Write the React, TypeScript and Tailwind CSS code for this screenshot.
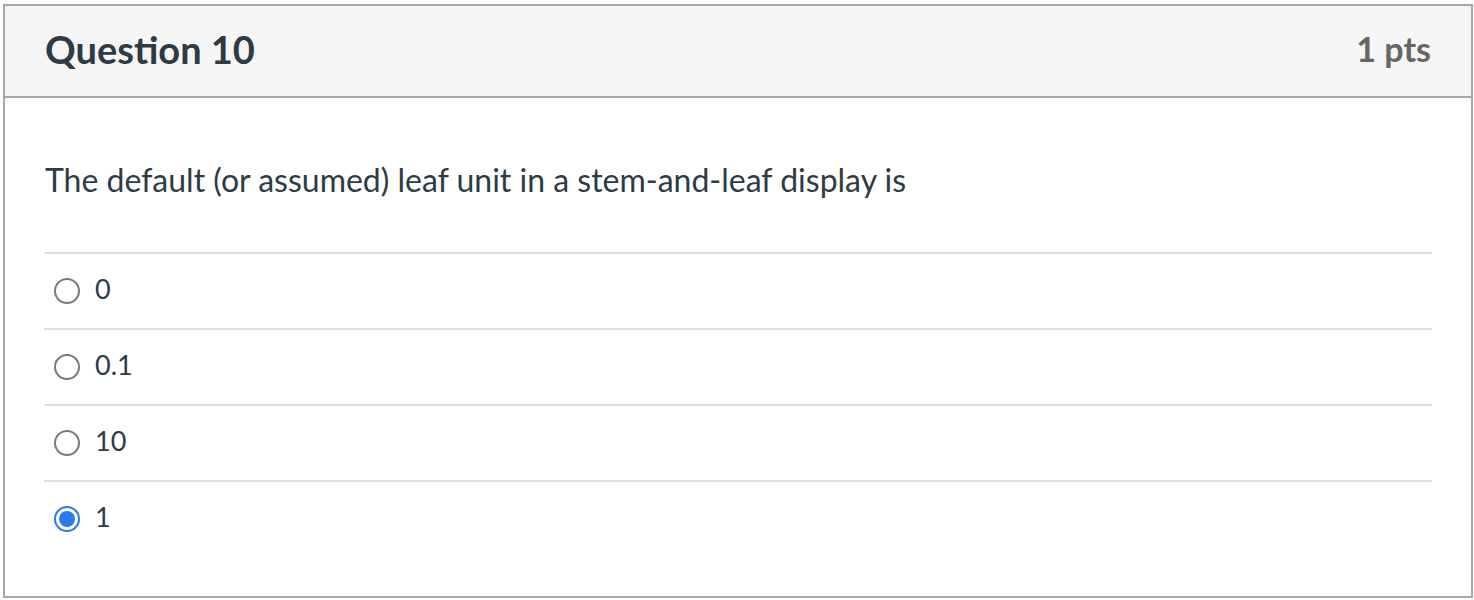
import React from "react";

const options = [
  { label: "0", checked: false },
  { label: "0.1", checked: false },
  { label: "10", checked: false },
  { label: "1", checked: true },
];

function Radio({ checked }: { checked: boolean }) {
  if (checked) {
    return (
      <span className="flex h-[26px] w-[26px] shrink-0 items-center justify-center rounded-full border-[2px] border-[#2b7bea] bg-white">
        <span className="h-[16px] w-[16px] rounded-full bg-[#2b7bea]" />
      </span>
    );
  }
  return <span className="h-[26px] w-[26px] shrink-0 rounded-full border-[2px] border-[#7a7a7a] bg-white" />;
}

export default function App() {
  return (
    <div className="bg-white pl-[3px] pt-[4px]" style={{ fontFamily: "Lato, 'Noto Sans', sans-serif" }}>
      <div className="flex h-[594px] w-[1470px] flex-col border-[2px] border-[#a6a6a6] bg-white">
        <div className="flex h-[92px] shrink-0 items-center justify-between border-b-[2px] border-[#a6a6a6] bg-[#f5f5f5] pb-[4px] pl-[40px] pr-[40px]">
          <h2 className="text-[38px] leading-[44px] font-bold text-[#2d3b45]">Question 10</h2>
          <span className="text-[34px] leading-[40px] font-bold text-[#666666]">1 pts</span>
        </div>
        <div className="px-[39px] pt-[62px]">
          <p className="pl-[1px] text-[32px] leading-[40px] text-[#2d3b45]">
            The default (or assumed) leaf unit in a stem-and-leaf display is
          </p>
          <div className="mt-[52px]">
            {options.map((o) => (
              <div key={o.label} className="flex h-[76px] items-center gap-[15px] border-t-[2px] border-[#e0e0e0] pl-[10px]">
                <Radio checked={o.checked} />
                <span className="pb-[4px] text-[27px] leading-[32px] text-[#2d3b45]">{o.label}</span>
              </div>
            ))}
          </div>
        </div>
      </div>
    </div>
  );
}
